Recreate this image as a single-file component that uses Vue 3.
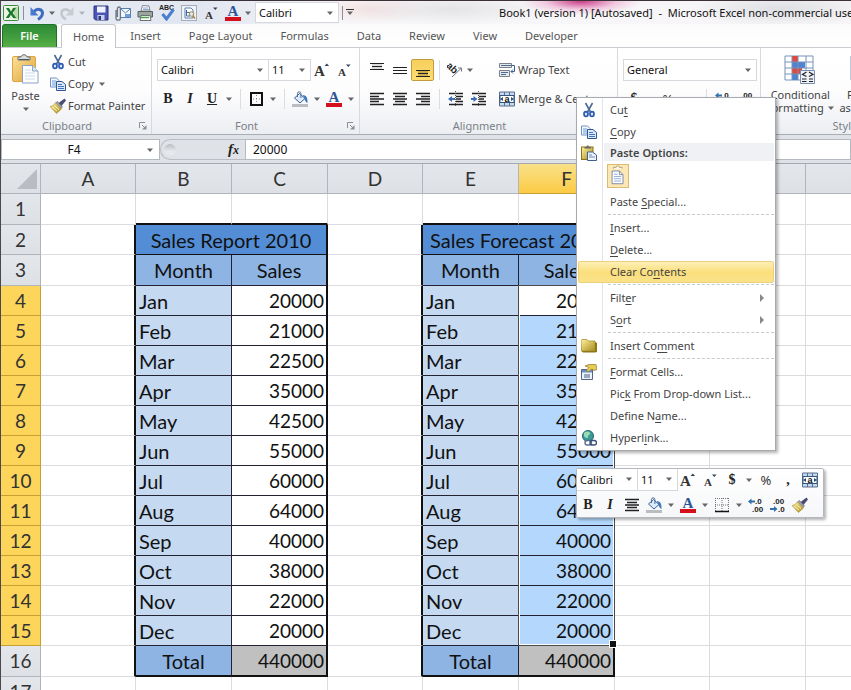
<script setup>
import { ref } from 'vue'

const tabs = ['Insert', 'Page Layout', 'Formulas', 'Data', 'Review', 'View', 'Developer']
const columns = ['A', 'B', 'C', 'D', 'E', 'F', 'G', 'H', 'I']
const months = ['Jan', 'Feb', 'Mar', 'Apr', 'May', 'Jun', 'Jul', 'Aug', 'Sep', 'Oct', 'Nov', 'Dec']
const sales = [20000, 21000, 22500, 35000, 42500, 55000, 60000, 64000, 40000, 38000, 22000, 20000]
const total = sales.reduce((sum, value) => sum + value, 0)
const formula = ref('20000')
const cellName = ref('F4')

const menu = [
  { pre: 'Cu', key: 't', post: '', icon: 'cut' },
  { pre: '', key: 'C', post: 'opy', icon: 'copy' },
  { type: 'paste' },
  { pre: 'Paste ', key: 'S', post: 'pecial...' },
  { type: 'line' },
  { pre: '', key: 'I', post: 'nsert...' },
  { pre: '', key: 'D', post: 'elete...' },
  { pre: 'Clear Co', key: 'n', post: 'tents', active: true },
  { type: 'line' },
  { pre: 'Filt', key: 'e', post: 'r', sub: true },
  { pre: 'S', key: 'o', post: 'rt', sub: true },
  { type: 'line' },
  { pre: 'Insert Co', key: 'm', post: 'ment', icon: 'note' },
  { type: 'line' },
  { pre: '', key: 'F', post: 'ormat Cells...', icon: 'format' },
  { pre: 'Pic', key: 'k', post: ' From Drop-down List...' },
  { pre: 'Define N', key: 'a', post: 'me...' },
  { pre: 'Hyperl', key: 'i', post: 'nk...', icon: 'link' }
]
</script>

<template>
  <div class="window">
    <svg class="sprite" aria-hidden="true">
      <defs>
        <linearGradient id="gold" x1="0" y1="0" x2="1" y2="1">
          <stop offset="0" stop-color="#fbe29a" /><stop offset="1" stop-color="#dfa336" />
        </linearGradient>
        <linearGradient id="olive" x1="0" y1="0" x2="1" y2="1">
          <stop offset="0" stop-color="#fff3a0" /><stop offset="1" stop-color="#a88a1c" />
        </linearGradient>
        <symbol id="excel" viewBox="0 0 16 16">
          <rect x=".5" y=".5" width="15" height="15" rx="1" fill="#e9f5e4" stroke="#3f8c3a" />
          <path d="M11 2h4v12h-4z" fill="#b9dcae" />
          <path d="M3 3h3l2 3.400L10 3h3L9.700 8l3.500 5h-3.100L8 9.700 5.900 13H2.800L6.300 8z" fill="#1d7a2c" />
        </symbol>
        <symbol id="undo" viewBox="0 0 16 16">
          <path d="M5 6.500C8 3 13.500 4 13.500 8c0 2.800-2 5-4.500 6.500" fill="none" stroke="#3d6cc0" stroke-width="3" />
          <path d="M1.500 2v8.500h8z" fill="#4a7ace" />
        </symbol>
        <symbol id="redo" viewBox="0 0 16 16">
          <path d="M11 6.500C8 3 2.500 4 2.500 8c0 2.800 2 5 4.500 6.500" fill="none" stroke="#c3c7cd" stroke-width="2.600" />
          <path d="M14.500 2v8.500h-8z" fill="#c9cdd3" />
        </symbol>
        <symbol id="save" viewBox="0 0 16 16">
          <path d="M1 1h14v14H2.500L1 13.500z" fill="#4a55b5" stroke="#2d357f" />
          <path d="M4 1.500h8.500v6H4z" fill="#eef2fb" />
          <path d="M4.500 10h7v5h-7z" fill="#c9cfe8" /><path d="M5.500 11h2.500v4H5.500z" fill="#2d357f" />
        </symbol>
        <symbol id="attach" viewBox="0 0 16 16">
          <path d="M5.500 3.500h10v9h-10z" fill="#f4f8fd" stroke="#5a7fae" />
          <path d="M6 4l4.500 4L15 4" fill="none" stroke="#5a7fae" />
          <path d="M1 5v8a2.200 2.200 0 0 0 4.400 0V3.500a1.500 1.500 0 0 0-3 0V12" fill="none" stroke="#6e7884" stroke-width="1.300" />
          <path d="M10 9h5v3h-5z" fill="#6f9fda" />
        </symbol>
        <symbol id="print" viewBox="0 0 16 16">
          <path d="M4 6l1.500-5.500L12 1l1 5z" fill="#fff" stroke="#7f868e" />
          <path d="M1 6.500h14.500V12H1z" fill="#9aa4a0" stroke="#58605c" />
          <path d="M4 10.500h9l1 5H3z" fill="#fff" stroke="#6d746f" />
          <path d="M4 12.500h8" stroke="#4c9c4c" stroke-width="1.500" /><path d="M6 3h5M6 4.500h6" stroke="#8ba7c9" />
        </symbol>
        <symbol id="spell" viewBox="0 0 16 16">
          <text x="0" y="5" font-family="Liberation Sans, sans-serif" font-weight="700" font-size="7" fill="#222">ABC</text>
          <path d="M3.500 9L7.500 14l7-9.500" fill="none" stroke="#4a7fd0" stroke-width="3" />
        </symbol>
        <symbol id="preview" viewBox="0 0 16 16">
          <rect x=".5" y=".5" width="15" height="15" fill="#eef3f9" stroke="#a5acb5" />
          <path d="M4 3h6l2 2v8H4z" fill="#fff" stroke="#5f7fae" /><path d="M5.500 5v6h3.500V7.500H5.500" fill="none" stroke="#3c67ad" />
          <circle cx="10.500" cy="9" r="2.300" fill="#dbe9f8" stroke="#a9863a" /><path d="M12 11l2 2.500" stroke="#a9863a" stroke-width="1.500" />
        </symbol>
        <symbol id="grow" viewBox="0 0 16 16">
          <text x="0" y="14" font-family="Liberation Serif, serif" font-weight="700" font-size="15" fill="#333">A</text>
          <path d="M10.500 4L12.800 1.500l2.300 2.500z" fill="#345" />
        </symbol>
        <symbol id="shrink" viewBox="0 0 16 16">
          <text x="2" y="14" font-family="Liberation Serif, serif" font-weight="700" font-size="11" fill="#333">A</text>
          <path d="M10 2.500h4.600L12.300 5z" fill="#345" />
        </symbol>
        <symbol id="color" viewBox="0 0 16 16">
          <text x="2.500" y="11" font-family="Liberation Serif, serif" font-weight="700" font-size="15" fill="#2d5596">A</text>
          <path d="M0 12h16v4H0z" fill="#d3101c" />
        </symbol>
        <symbol id="fill" viewBox="0 0 16 16">
          <path d="M0 13h16v3H0z" fill="#b9bcc0" />
          <path d="M7.500 2.500l5.500 5-5 4.500-5.500-5z" fill="#dcebfa" stroke="#3c5f92" />
          <path d="M5.500 6V2.500a1.700 1.700 0 0 1 3.400 0V7" fill="none" stroke="#4e6c96" />
          <path d="M10.500 4c3.500 .3 5.300 2 5 8-1.700-1-2.800-2.500-2.800-4.500z" fill="#3f78bd" />
        </symbol>
        <symbol id="cut" viewBox="0 0 16 16">
          <path d="M4.500 1l5 9M11.500 1l-5 9" stroke="#4d6a94" stroke-width="1.600" fill="none" />
          <ellipse cx="5" cy="12" rx="2" ry="2.400" fill="#dbe6f8" stroke="#2d5cb0" stroke-width="1.700" />
          <ellipse cx="11" cy="12" rx="2" ry="2.400" fill="#dbe6f8" stroke="#2d5cb0" stroke-width="1.700" />
        </symbol>
        <symbol id="copy" viewBox="0 0 16 16">
          <path d="M.5 2h6L9 4.500V11H.5z" fill="#f3f8fe" stroke="#6f93c4" /><path d="M2 5h4M2 7h5M2 9h5" stroke="#6f9bd6" />
          <path d="M6.500 5.500h5.500L15.500 8.500V14.500h-9z" fill="#dbe9fa" stroke="#33568f" /><path d="M8 8.500h4M8 10.500h6M8 12.500h6" stroke="#3f76c2" />
        </symbol>
        <symbol id="brush" viewBox="0 0 16 16">
          <path d="M14.500 .5l1.500 2-5 6L8 5.500z" fill="#4a4a72" />
          <path d="M7.500 3.500L12.500 9 11 10.500 5.500 5z" fill="#9da2b6" stroke="#5b5f75" stroke-width=".6" />
          <path d="M5.500 4.500L11.500 11l-5 4.500L0 8.500C2.500 8.500 4 7 5.500 4.500z" fill="url(#olive)" stroke="#a9892c" stroke-width=".6" />
          <path d="M2 9l5 4M4 7.500l5 4" stroke="#fff6c0" stroke-width=".9" />
        </symbol>
        <symbol id="paste" viewBox="0 0 27 30">
          <rect x=".5" y="2.500" width="23" height="25" rx="1.500" fill="url(#gold)" stroke="#dba445" />
          <path d="M6 6V3h3c0-3 6-3 6 0h3v3z" fill="#d9dde2" stroke="#6b7078" /><path d="M7 5.500h10" stroke="#555" />
          <path d="M10.500 11.500h10l5.500 5.500v12H10.500z" fill="#fff" stroke="#8ba2c4" />
          <path d="M20.500 11.500V17H26" fill="#dbe7f6" stroke="#8ba2c4" />
          <path d="M13 16h6M13 19h10M13 22h10M13 25h10" stroke="#c9d8ec" />
        </symbol>
        <symbol id="clip" viewBox="0 0 16 16">
          <rect x=".5" y="2" width="11.500" height="12.500" fill="url(#olive)" stroke="#8d7119" />
          <path d="M3.500 3.500V2h2c0-2 2.500-2 2.500 0h2v1.500z" fill="#666" />
          <path d="M6.500 7h5l4 3v5.500h-9z" fill="#eef4fb" stroke="#3f5f93" /><path d="M8 10h3M8 12h6" stroke="#6a8cbd" />
        </symbol>
        <symbol id="sheet" viewBox="0 0 22 24">
          <path d="M6 4V2.500h3a1.700 1.700 0 0 1 3.400 0H15.500V4" fill="#fff" stroke="#b09a68" />
          <path d="M4.500 6.500h8l4 4v10h-12z" fill="#fff" stroke="#7585a0" /><path d="M12.500 6.500v4h4" fill="none" stroke="#7585a0" />
          <path d="M6.500 12.500h8M6.500 15h8M6.500 17.500h8M6.500 10h4" stroke="#8aa6d4" />
        </symbol>
        <symbol id="note" viewBox="0 0 16 16">
          <path d="M0 3l1-1.500h5L7.500 3H14v10H.5z" fill="url(#olive)" stroke="#a98f27" stroke-width=".8" />
          <path d="M14 4l2 1v9l-2 .5H2L.5 13H14z" fill="#8d761c" />
        </symbol>
        <symbol id="format" viewBox="0 0 16 16">
          <path d="M.5 5.500h11v10H.5z" fill="#eef3fb" stroke="#54658a" /><path d="M1 6h10v2.500H1z" fill="#6d8fc7" /><path d="M3 11h6M3 13h6" stroke="#3f5f93" />
          <path d="M4 2l4-1.500h7l1 5-3 1-2-1.500-4 3-1.500-2L8 3.500z" fill="#e8cd55" stroke="#8d7425" stroke-width=".7" />
        </symbol>
        <symbol id="link" viewBox="0 0 16 16">
          <circle cx="7" cy="6" r="5.500" fill="#3c9a97" stroke="#28636b" />
          <path d="M3 3c2-2 5-2 6 0s-3 2-2 4-3 1-4-1z" fill="#9bdcb4" />
          <rect x="4" y="10.500" width="6.500" height="4.500" rx="2.200" fill="#fff" stroke="#5a6f8d" stroke-width="1.400" />
          <rect x="9" y="10.500" width="6.500" height="4.500" rx="2.200" fill="none" stroke="#38507a" stroke-width="1.400" />
        </symbol>
        <symbol id="top" viewBox="0 0 16 16"><path d="M1 1.500h14M3 4.500h10M1 7.500h14" stroke="#222" stroke-width="1.200" /><path d="M3 3h10M3 6h10" stroke="#bbb" /></symbol>
        <symbol id="middle" viewBox="0 0 16 16"><path d="M1 5.500h14M1 8.500h14M1 11.500h14" stroke="#222" stroke-width="1.200" /></symbol>
        <symbol id="bottom" viewBox="0 0 16 16"><path d="M1 8.500h14M3 11.500h10M1 14.500h14" stroke="#222" stroke-width="1.200" /><path d="M3 10h10M3 13h10" stroke="#a5832a" /></symbol>
        <symbol id="left" viewBox="0 0 16 16"><path d="M1 2.500h14M1 5.500h9M1 8h14M1 10.500h9M1 13.500h14" stroke="#222" stroke-width="1.400" /></symbol>
        <symbol id="center" viewBox="0 0 16 16"><path d="M1 2.500h14M3 5.500h10M1 8h14M3 10.500h10M1 13.500h14" stroke="#222" stroke-width="1.400" /></symbol>
        <symbol id="right" viewBox="0 0 16 16"><path d="M1 2.500h14M6 5.500h9M1 8h14M6 10.500h9M1 13.500h14" stroke="#222" stroke-width="1.400" /></symbol>
        <symbol id="orient" viewBox="0 0 16 16">
          <text x="-2" y="8" transform="rotate(45 3 7)" font-family="Liberation Sans, sans-serif" font-weight="700" font-size="10" fill="#222">ab</text>
          <path d="M5 15l9-8.500M11 6h3.500v3.500" fill="none" stroke="#777" />
        </symbol>
        <symbol id="outdent" viewBox="0 0 16 16">
          <path d="M1 2.500h14M8 5.500h7M8 8h5M8 10.500h7M1 13.500h14" stroke="#222" stroke-width="1.700" /><path d="M0 8l4-3v2h3v2H4v2z" fill="#3a6fb5" /><path d="M7.500 0v16" stroke="#555" stroke-dasharray="1 1" />
        </symbol>
        <symbol id="indent" viewBox="0 0 16 16">
          <path d="M1 2.500h14M8 5.500h7M8 8h5M8 10.500h7M1 13.500h14" stroke="#222" stroke-width="1.700" /><path d="M6.500 8l-4-3v2H0v2h2.500v2z" fill="#3a6fb5" /><path d="M7.500 0v16" stroke="#555" stroke-dasharray="1 1" />
        </symbol>
        <symbol id="wrap" viewBox="0 0 16 16">
          <path d="M.5 1.500h12v4H.5zM.5 8.500h10v6H.5z" fill="#e4e7eb" stroke="#7b8189" /><path d="M2 3.500h12M2 10.500h7M2 12.500h5" stroke="#4f6c90" />
          <path d="M13 3.500h2.500v6H12m2-2l-2 2 2 2" fill="none" stroke="#3c5f92" />
        </symbol>
        <symbol id="merge" viewBox="0 0 16 16">
          <path d="M.5 1h15v14H.5z" fill="#c6d8ee" stroke="#5a6f8d" /><path d="M5.500 1v3M10.500 1v3M5.500 12v3M10.500 12v3" stroke="#5a6f8d" />
          <path d="M1 4.500h14v7H1z" fill="#fff" stroke="#31557f" /><path d="M1 8l3-2v4zM15 8l-3-2v4z" fill="#24507f" />
          <text x="5.500" y="10.500" font-family="Liberation Sans, sans-serif" font-weight="700" font-size="9" fill="#111">a</text>
        </symbol>
        <symbol id="box" viewBox="0 0 16 16">
          <path d="M3 2h11v12H3z" fill="none" stroke="#111" stroke-width="2" /><path d="M8.500 4v9M5 8h8" stroke="#888" stroke-dasharray="1 2" />
        </symbol>
        <symbol id="grid" viewBox="0 0 16 16">
          <path d="M1.500 1v13M8 1v13M14.500 1v13M1 1.500h14M1 8h14" stroke="#777" stroke-dasharray="1 1" /><path d="M1 14.500h14" stroke="#111" stroke-width="1.500" />
        </symbol>
        <symbol id="more" viewBox="0 0 16 16">
          <text x="7" y="7" font-family="Liberation Sans, sans-serif" font-weight="700" font-size="8" fill="#222">.0</text>
          <text x="4" y="15" font-family="Liberation Sans, sans-serif" font-weight="700" font-size="8" fill="#222">.00</text>
          <path d="M0 4.500l3.500-3v2H7v2H3.500v2z" fill="#3170ae" />
        </symbol>
        <symbol id="less" viewBox="0 0 16 16">
          <text x="3" y="7" font-family="Liberation Sans, sans-serif" font-weight="700" font-size="8" fill="#222">.00</text>
          <text x="8" y="15" font-family="Liberation Sans, sans-serif" font-weight="700" font-size="8" fill="#222">.0</text>
          <path d="M7.500 12L4 9v2H0v2h4v2z" fill="#3170ae" />
        </symbol>
        <symbol id="cond" viewBox="0 0 32 30">
          <path d="M1 1h28v24H1z" fill="#fff" stroke="#7793bb" />
          <path d="M8 1h6v6H8zM8 13h10v6H8z" fill="#e2483d" /><path d="M8 7h13v6H8z" fill="#4f83cf" /><path d="M8 19h6v6H8z" fill="#4f83cf" />
          <path d="M1 7h28M1 13h28M1 19h28M8 1v24M14 1v24M22 1v24" stroke="#7793bb" fill="none" />
          <path d="M16.500 15.500h14v13h-14z" fill="#eef3fa" stroke="#7b8da8" />
          <path d="M22.500 17l-4 2.500 4 2M18 24h4.500M25 17l4 2.500-4 2M25 24h4M18 26.500h4.500M25 26.500h4" fill="none" stroke="#222" stroke-width="1.200" />
        </symbol>
        <symbol id="table" viewBox="0 0 32 30">
          <path d="M1 1h28v24H1z" fill="#fff" stroke="#7793bb" /><path d="M1 7h28M1 13h28M1 19h28M8 1v24M15 1v24M22 1v24" stroke="#7793bb" />
        </symbol>
        <symbol id="caret" viewBox="0 0 8 8"><path d="M1 2.500h6L4 6z" fill="#666" /></symbol>
        <symbol id="launch" viewBox="0 0 8 8"><path d="M.5 6V.5H6M3 3l3 3" fill="none" stroke="#8a9099" /><path d="M7.500 3v4.500H3z" fill="#8a9099" /></symbol>
      </defs>
    </svg>

    <header class="title-bar">
      <button class="tool app" aria-label="Excel"><svg class="i16"><use href="#excel" /></svg></button>
      <span class="rule"></span>
      <button class="tool" aria-label="Undo"><svg class="i16"><use href="#undo" /></svg></button>
      <button class="drop slim" aria-label="Undo list"><svg class="i8"><use href="#caret" /></svg></button>
      <button class="tool" aria-label="Redo"><svg class="i16"><use href="#redo" /></svg></button>
      <button class="drop slim faint" aria-label="Redo list"><svg class="i8"><use href="#caret" /></svg></button>
      <div class="quick">
        <button v-for="name in ['save', 'attach', 'print', 'spell', 'preview', 'shrink', 'color']" :key="name" class="tool" :aria-label="name">
          <svg class="i16"><use :href="'#' + name" /></svg>
        </button>
        <button class="drop slim" aria-label="Font colors"><svg class="i8"><use href="#caret" /></svg></button>
      </div>
      <div class="combo quick-font">
        <select aria-label="Quick font"><option>Calibri</option></select>
        <svg class="i8"><use href="#caret" /></svg>
      </div>
      <span class="rule end"></span>
      <button class="drop customize" aria-label="Customize toolbar"><svg class="i8"><use href="#caret" /></svg></button>
      <h1>Book1 (version 1) [Autosaved]&nbsp; -&nbsp; Microsoft Excel non-commercial use</h1>
    </header>

    <nav class="tabs">
      <button class="file">File</button>
      <button class="tab current">Home</button>
      <button v-for="tab in tabs" :key="tab" class="tab">{{ tab }}</button>
    </nav>

    <section class="ribbon">
      <div class="group clipboard">
        <div class="body">
          <button class="big paste"><svg class="paste-icon"><use href="#paste" /></svg><span>Paste</span><svg class="i8"><use href="#caret" /></svg></button>
          <div class="stack">
            <button class="small"><svg class="i16"><use href="#cut" /></svg>Cut</button>
            <button class="small"><svg class="i16"><use href="#copy" /></svg>Copy<svg class="i8 after"><use href="#caret" /></svg></button>
            <button class="small"><svg class="i16"><use href="#brush" /></svg>Format Painter</button>
          </div>
        </div>
        <div class="caption"><span>Clipboard</span><svg class="i8"><use href="#launch" /></svg></div>
      </div>

      <div class="group font">
        <div class="rows">
          <div class="row">
            <div class="combo family"><select aria-label="Font"><option>Calibri</option></select><svg class="i8"><use href="#caret" /></svg></div>
            <div class="combo size"><select aria-label="Font size"><option>11</option></select><svg class="i8"><use href="#caret" /></svg></div>
            <button class="tool" aria-label="Increase font size"><svg class="i16"><use href="#grow" /></svg></button>
            <button class="tool" aria-label="Decrease font size"><svg class="i16"><use href="#shrink" /></svg></button>
          </div>
          <div class="row">
            <button class="tool glyph">B</button>
            <button class="tool glyph italic">I</button>
            <button class="tool glyph under">U</button>
            <button class="drop" aria-label="Underline styles"><svg class="i8"><use href="#caret" /></svg></button>
            <span class="bar"></span>
            <button class="tool" aria-label="Borders"><svg class="i16"><use href="#box" /></svg></button>
            <button class="drop" aria-label="Border styles"><svg class="i8"><use href="#caret" /></svg></button>
            <span class="bar"></span>
            <button class="tool" aria-label="Fill color"><svg class="i16"><use href="#fill" /></svg></button>
            <button class="drop" aria-label="Fill colors"><svg class="i8"><use href="#caret" /></svg></button>
            <button class="tool" aria-label="Font color"><svg class="i16"><use href="#color" /></svg></button>
            <button class="drop" aria-label="Font colors"><svg class="i8"><use href="#caret" /></svg></button>
          </div>
        </div>
        <div class="caption"><span>Font</span><svg class="i8"><use href="#launch" /></svg></div>
      </div>

      <div class="group alignment">
        <div class="body split">
          <div class="rows">
            <div class="row">
              <button class="tool wide" aria-label="Top align"><svg class="i16"><use href="#top" /></svg></button>
              <button class="tool wide" aria-label="Middle align"><svg class="i16"><use href="#middle" /></svg></button>
              <button class="tool wide pressed" aria-label="Bottom align"><svg class="i16"><use href="#bottom" /></svg></button>
              <span class="bar"></span>
              <button class="tool" aria-label="Orientation"><svg class="i16"><use href="#orient" /></svg></button>
              <button class="drop slim" aria-label="Orientations"><svg class="i8"><use href="#caret" /></svg></button>
            </div>
            <div class="row">
              <button class="tool wide" aria-label="Align left"><svg class="i16"><use href="#left" /></svg></button>
              <button class="tool wide" aria-label="Center"><svg class="i16"><use href="#center" /></svg></button>
              <button class="tool wide" aria-label="Align right"><svg class="i16"><use href="#right" /></svg></button>
              <span class="bar"></span>
              <button class="tool wide" aria-label="Decrease indent"><svg class="i16"><use href="#outdent" /></svg></button>
              <button class="tool wide" aria-label="Increase indent"><svg class="i16"><use href="#indent" /></svg></button>
            </div>
          </div>
          <div class="rows texts">
            <button class="row labelled"><svg class="i16"><use href="#wrap" /></svg>Wrap Text</button>
            <button class="row labelled"><svg class="i16"><use href="#merge" /></svg>Merge &amp; Center<svg class="i8 after"><use href="#caret" /></svg></button>
          </div>
        </div>
        <div class="caption"><span>Alignment</span><svg class="i8"><use href="#launch" /></svg></div>
      </div>

      <div class="group number">
        <div class="rows">
          <div class="row"><div class="combo general"><select aria-label="Number format"><option>General</option></select><svg class="i8"><use href="#caret" /></svg></div></div>
          <div class="row">
            <button class="tool glyph">$</button>
            <button class="drop" aria-label="Currencies"><svg class="i8"><use href="#caret" /></svg></button>
            <button class="tool percent">%</button>
            <button class="tool glyph">,</button>
            <span class="bar"></span>
            <button class="tool wide" aria-label="Increase decimal"><svg class="i16"><use href="#more" /></svg></button>
            <button class="tool wide" aria-label="Decrease decimal"><svg class="i16"><use href="#less" /></svg></button>
          </div>
        </div>
        <div class="caption"><span>Number</span></div>
      </div>

      <div class="group styles">
        <div class="body">
          <button class="big"><svg class="style-icon"><use href="#cond" /></svg><span>Conditional</span><span>Formatting <svg class="i8"><use href="#caret" /></svg></span></button>
          <button class="big"><svg class="style-icon"><use href="#table" /></svg><span>Format</span><span>as Table <svg class="i8"><use href="#caret" /></svg></span></button>
        </div>
        <div class="caption"><span>Styles</span></div>
      </div>
    </section>

    <section class="formula-bar">
      <div class="name-box">
        <input v-model="cellName" aria-label="Name box" />
        <svg class="i8"><use href="#caret" /></svg>
      </div>
      <div class="fx-area"><span class="knob"></span><button class="fx" aria-label="Insert function"><i>f</i><i class="x">x</i></button></div>
      <input v-model="formula" class="formula" aria-label="Formula" />
    </section>

    <main class="sheet">
      <table>
        <colgroup>
          <col class="col-head" />
          <col v-for="c in columns" :key="c" :class="'ADG'.includes(c) ? 'col-a' : 'col-b'" />
        </colgroup>
        <thead>
          <tr>
            <th class="corner"><svg viewBox="0 0 20 20"><path d="M20 0v20H0z" fill="#b9bdc3" /></svg></th>
            <th v-for="c in columns" :key="c" :class="{ picked: c === 'F' }">{{ c }}</th>
          </tr>
        </thead>
        <tbody>
          <tr class="tall">
            <th>1</th><td></td><td class="edge-b"></td><td class="edge-b"></td><td></td><td class="edge-b"></td><td class="edge-b"></td><td></td><td></td><td></td>
          </tr>
          <tr>
            <th>2</th><td class="edge-r"></td>
            <td colspan="2" class="heading">Sales Report 2010</td>
            <td class="edge-r"></td>
            <td colspan="2" class="heading">Sales Forecast 2011</td>
            <td></td><td></td><td></td>
          </tr>
          <tr class="tall">
            <th>3</th><td class="edge-r"></td>
            <td class="sub">Month</td><td class="sub last">Sales</td>
            <td class="edge-r"></td>
            <td class="sub">Month</td><td class="sub last">Sales</td>
            <td></td><td></td><td></td>
          </tr>
          <tr v-for="(month, i) in months" :key="month">
            <th class="picked">{{ i + 4 }}</th><td class="edge-r"></td>
            <td class="month">{{ month }}</td><td class="value last">{{ sales[i] }}</td>
            <td class="edge-r"></td>
            <td class="month">{{ month }}</td>
            <td class="value last" :class="i ? 'chosen' : 'anchor'">{{ sales[i] }}<span v-if="i === 0" class="marquee"></span></td>
            <td></td><td></td><td></td>
          </tr>
          <tr class="tall total">
            <th>16</th><td class="edge-r"></td>
            <td class="sub edge-b">Total</td><td class="value sum last edge-b">{{ total }}</td>
            <td class="edge-r"></td>
            <td class="sub edge-b">Total</td><td class="value sum last edge-b">{{ total }}</td>
            <td></td><td></td><td></td>
          </tr>
          <tr>
            <th>17</th><td v-for="c in columns" :key="c"></td>
          </tr>
        </tbody>
      </table>
    </main>

    <div class="menu" role="menu">
      <template v-for="(item, i) in menu" :key="i">
        <hr v-if="item.type === 'line'" />
        <div v-else-if="item.type === 'paste'" class="paste-options">
          <svg class="i16"><use href="#clip" /></svg>
          <strong>Paste Options:</strong>
          <button class="paste-choice" aria-label="Paste"><svg><use href="#sheet" /></svg></button>
        </div>
        <button v-else class="item" :class="{ active: item.active }" role="menuitem">
          <span class="slot"><svg v-if="item.icon" class="i16"><use :href="'#' + item.icon" /></svg></span>
          <span class="text">{{ item.pre }}<u>{{ item.key }}</u>{{ item.post }}</span>
          <svg v-if="item.sub" class="arrow" viewBox="0 0 8 8"><path d="M2 0l4 4-4 4z" fill="#888" /></svg>
        </button>
      </template>
    </div>

    <div class="mini">
      <div class="row">
        <div class="combo mini-family"><select aria-label="Mini font"><option>Calibri</option></select><svg class="i8"><use href="#caret" /></svg></div>
        <div class="combo mini-size"><select aria-label="Mini font size"><option>11</option></select><svg class="i8"><use href="#caret" /></svg></div>
        <button class="tool" aria-label="Grow font"><svg class="i16"><use href="#grow" /></svg></button>
        <button class="tool" aria-label="Shrink font"><svg class="i16"><use href="#shrink" /></svg></button>
        <button class="tool glyph">$</button>
        <button class="drop" aria-label="Currencies"><svg class="i8"><use href="#caret" /></svg></button>
        <button class="tool percent">%</button>
        <button class="tool glyph">,</button>
        <button class="tool" aria-label="Merge"><svg class="i16"><use href="#merge" /></svg></button>
      </div>
      <div class="row">
        <button class="tool glyph">B</button>
        <button class="tool glyph italic">I</button>
        <button class="tool" aria-label="Center"><svg class="i16"><use href="#center" /></svg></button>
        <button class="tool" aria-label="Fill"><svg class="i16"><use href="#fill" /></svg></button>
        <button class="drop" aria-label="Fill colors"><svg class="i8"><use href="#caret" /></svg></button>
        <button class="tool" aria-label="Color"><svg class="i16"><use href="#color" /></svg></button>
        <button class="drop" aria-label="Colors"><svg class="i8"><use href="#caret" /></svg></button>
        <button class="tool" aria-label="Borders"><svg class="i16"><use href="#grid" /></svg></button>
        <button class="drop" aria-label="Border styles"><svg class="i8"><use href="#caret" /></svg></button>
        <button class="tool" aria-label="Increase decimal"><svg class="i16"><use href="#more" /></svg></button>
        <button class="tool" aria-label="Decrease decimal"><svg class="i16"><use href="#less" /></svg></button>
        <button class="tool" aria-label="Format painter"><svg class="i16"><use href="#brush" /></svg></button>
      </div>
    </div>
  </div>
</template>

<style>
body { background: #fff; }
</style>

<style scoped>
* { box-sizing: border-box; }
.window {
  position: relative;
  display: flex;
  flex-direction: column;
  height: 100vh;
  overflow: hidden;
  border-left: 1px solid #4a4a4e;
  border-top: 1px solid #3a3038;
  font: 11px/14px "Noto Sans", "Open Sans", sans-serif;
  color: #444;
  background: #fff;
}
.sprite { position: absolute; width: 0; height: 0; }
button, input, select {
  font: inherit;
  color: inherit;
  margin: 0;
  padding: 0;
  border: 0;
  background: none;
  border-radius: 0;
}
button { white-space: nowrap; }
.i16 { width: 16px; height: 16px; flex: none; }
.i8 { width: 8px; height: 8px; flex: none; }
.tool, .drop {
  display: flex;
  align-items: center;
  justify-content: center;
  flex: none;
  width: 22px;
  height: 22px;
}
.drop { width: 12px; }
.drop.slim { width: 8px; }
.faint { opacity: .4; }
.wide { width: 23px; }
.glyph { font: bold 14px/16px "Liberation Serif", serif; color: #222; }
.italic { font-style: italic; }
.under { text-decoration: underline; }
.percent { font-size: 13px; color: #333; }
.bar { display: flex; justify-content: center; width: 10px; height: 20px; flex: none; }
.bar::before { content: ""; width: 1px; background: #dadde1; }

.combo { position: relative; display: flex; flex: none; height: 22px; border: 1px solid #d5d8dd; background: #fff; color: #111; }
.combo select { appearance: none; flex: 1; min-width: 0; padding: 0 3px; outline: 0; }
.combo .i8 { position: absolute; right: 4px; top: 6px; pointer-events: none; }

.title-bar {
  display: flex;
  align-items: center;
  flex: none;
  height: 23px;
  background:
    radial-gradient(ellipse 60px 14px at 580px 0, #c93a86 0, rgba(230, 120, 180, .35) 60%, transparent 100%),
    radial-gradient(ellipse 100px 16px at 450px 8px, #e4e4e6, transparent),
    radial-gradient(ellipse 60px 14px at 370px 8px, #f3e1e2, transparent),
    radial-gradient(ellipse 90px 18px at 780px 8px, #dddfe2, transparent),
    linear-gradient(90deg, #e6ebf3, #e2e6f0 200px, #f7f6f8 340px, #f7f5f7);
}
.app { width: 20px; }
.rule { flex: none; width: 1px; height: 14px; margin: 0 2px; background: #8b8f96; }
.quick { display: flex; margin: 0 3px 0 4px; }
.quick-font { width: 84px; height: 21px; }
.rule.end { margin: 0 3px; }
.customize { border-top: 1px solid #333; height: 8px; width: 8px; }
h1 { margin: 0 0 0 145px; font: 11px/16px "Noto Sans", sans-serif; color: #111; white-space: nowrap; }

.tabs { display: flex; flex: none; height: 24px; padding-left: 1px; background: linear-gradient(#fbfbfc, #fff); border-bottom: 1px solid #c9ccd1; }
.file { width: 55px; margin-right: 4px; border-radius: 3px 3px 0 0; background: linear-gradient(#2f8a35, #3f9c3e 50%, #57b045); border: 1px solid #1f7329; border-bottom: 0; color: #fff; font-weight: 600; }
.tab { padding: 0 14px; color: #555; }
.current { height: 24px; padding: 0 11px; background: #fff; border: 1px solid #c3c7cc; border-bottom: 0; border-radius: 3px 3px 0 0; }

.ribbon { display: flex; flex: none; height: 87px; background: linear-gradient(#fff, #fdfdfe 50%, #eceef2); border-bottom: 1px solid #a9adb5; }
.group { display: flex; flex-direction: column; justify-content: space-between; flex: none; border-right: 1px solid #d6d9de; }
.body { display: flex; flex: 1; }
.rows { display: flex; flex-direction: column; gap: 7px; padding: 11px 0 0 5px; }
.row { display: flex; align-items: center; height: 22px; }
.caption { display: flex; align-items: center; justify-content: center; height: 16px; color: #7b8088; }
.caption span { flex: 1; padding-right: 6px; text-align: center; }
.caption .i8 { margin-right: 4px; }
.clipboard { width: 151px; }
.font { width: 208px; }
.alignment { width: 258px; }
.number { width: 143px; }
.styles { flex: 1 0 180px; }
.big { display: flex; flex-direction: column; align-items: center; }
.paste { width: 49px; padding-top: 6px; }
.paste-icon { width: 27px; height: 30px; margin-bottom: 5px; }
.paste .i8 { margin-top: 2px; }
.stack { padding-top: 3px; }
.small { display: flex; align-items: center; height: 22px; }
.small .i16 { margin-right: 2px; }
.after { margin-left: 4px; }
.family { width: 112px; }
.size { width: 42px; border-left: 0; }
.pressed { border: 1px solid #c29b3a; border-radius: 2px; background: linear-gradient(#f7cf5c, #fddd73); }
.texts { padding-left: 8px; margin-left: 1px; }
.split .rows:first-child { width: 130px; }
.labelled { gap: 3px; }
.general { width: 134px; }
.styles .body { padding: 7px 0 0 5px; }
.style-icon { width: 32px; height: 30px; margin-bottom: 3px; }
.styles .big { min-width: 62px; }
.styles .big span { line-height: 13px; }

.formula-bar { display: flex; flex: none; height: 29px; padding: 4px 0 3px; background: #dfe2e7; border-bottom: 1px solid #a4a8af; color: #111; font-size: 12px; }
.name-box { display: flex; align-items: center; width: 159px; background: #fff; border: 1px solid #b4b8bf; }
.name-box input { flex: 1; min-width: 0; text-align: center; }
.name-box .i8 { margin: 0 5px 0 0; }
.fx-area { display: flex; justify-content: space-between; align-items: center; width: 85px; padding-right: 6px; background: #dfe2e7; border-radius: 11px 0 0 11px; border: 1px solid #b9bdc4; border-right: 0; }
.knob { width: 12px; height: 12px; margin-left: 3px; border-radius: 50%; background: linear-gradient(#b9bdc3, #e6e8eb 60%); }
.fx { font: italic bold 15px/18px "Liberation Serif", serif; color: #222; }
.x { font-size: 12px; }
.formula { flex: 1; min-width: 0; padding: 0 7px; background: #fff; border: 1px solid #b4b8bf; }

.sheet { flex: 1; min-height: 0; overflow: hidden; font: 19px/28px Lato, "Noto Sans", sans-serif; color: #111; }
table { border-spacing: 0; table-layout: fixed; width: 901px; }
.col-head { width: 40px; }
.col-a { width: 95px; }
.col-b { width: 96px; }
th, td { height: 30px; padding: 0; border-right: 1px solid #dadcdf; border-bottom: 1px solid #dadcdf; white-space: nowrap; line-height: 26px; }
.tall > * { height: 31px; }
th { font-weight: 400; color: #333; background: linear-gradient(#e3e6ea, #dde0e5); border-color: #b1b5bb; }
th.picked { background: #fcd55a; border-color: #c89f35; }
thead th.picked { background: linear-gradient(#f9e188, #fbcb45); }
.corner svg { display: block; width: 20px; height: 20px; margin: 0 3px 0 auto; }
.edge-r { border-right: 2px solid #111; }
td.edge-b { border-bottom: 2px solid #111; }
.heading, .sub, .month { font-size: 20px; }
.heading { text-align: center; background: #538dd5; border-right: 2px solid #111; border-bottom-color: #111; }
.sub { text-align: center; background: #8db4e2; border-color: #223; }
.month { padding-left: 3px; background: #c5d9f1; border-color: #223; }
.value { padding-right: 2px; text-align: right; border-color: #223; }
td.last { border-right: 2px solid #111; }
.chosen { background: #b3d7fd; }
.anchor { position: relative; background: #fff; }
.sum { background: #c0c0c0; }
.marquee { position: absolute; left: 0; top: 0; width: 95px; height: 359px; border: 1px solid #fff; outline: 1px solid #4a4a48; pointer-events: none; }
.marquee::after { content: ""; position: absolute; right: -4px; bottom: -4px; width: 6px; height: 6px; background: #111; border: 1px solid #fff; }

.menu {
  position: absolute;
  left: 575px;
  top: 96px;
  width: 200px;
  padding: 1px;
  border: 1px solid #a7abb0;
  background: linear-gradient(90deg, transparent 25px, #e2e4e7 25px, #e2e4e7 26px, transparent 26px), #fff;
  box-shadow: 2px 2px 3px rgba(0, 0, 0, .3);
}
.item { display: flex; align-items: center; width: 100%; height: 22px; border: 1px solid transparent; text-align: left; }
.slot { display: flex; width: 31px; padding-left: 2px; flex: none; }
.text { flex: 1; }
.text u { text-underline-offset: 2px; }
.arrow { width: 8px; height: 8px; margin-right: 7px; }
.active { border-color: #ecd07a; border-radius: 2px; background: linear-gradient(#fdf0b8, #fbdf7c 50%, #fae28a); }
.menu hr { height: 1px; margin: 1px 0 2px 30px; border: 0; border-top: 1px dashed #c6c9cd; }
.paste-options { display: grid; grid-template-columns: 30px 1fr; height: 48px; grid-template-rows: 20px 28px; }
.paste-options > .i16 { margin: 2px 0 0 3px; }
.paste-options strong { height: 18px; margin-left: -4px; padding-left: 6px; background: #eff1f5; line-height: 19px; font-weight: 600; }
.paste-choice { grid-column: 2; width: 22px; height: 24px; margin-top: 1px; margin-left: -1px; border: 1px solid #dcbc74; background: #fbe8b4; }
.paste-choice svg { display: block; width: 20px; height: 22px; }

.mini {
  position: absolute;
  left: 575px;
  top: 467px;
  display: flex;
  flex-direction: column;
  gap: 3px;
  width: 248px;
  height: 50px;
  border: 1px solid #b4b8bd;
  border-radius: 2px;
  background: linear-gradient(#fff, #f6f7f9);
  box-shadow: 2px 2px 3px rgba(0, 0, 0, .3);
}
.mini-family { width: 61px; border-width: 0 1px 1px 0; }
.mini-size { width: 40px; border-width: 0 1px 1px 0; margin-right: -1px; }
</style>
